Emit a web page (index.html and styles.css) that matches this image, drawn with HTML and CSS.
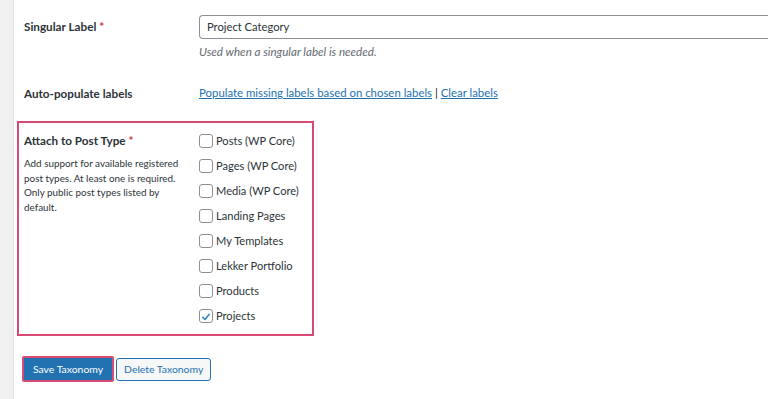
FILE: index.html
```html
<!DOCTYPE html>
<html>
<head>
<meta charset="utf-8">
<link rel="stylesheet" href="styles.css">
</head>
<body>
<div class="page">
  <div class="panel">
    <div class="row row-singular">
      <div class="label">Singular Label <span class="req">*</span></div>
      <div class="field">
        <div class="input">Project Category</div>
        <p class="help">Used when a singular label is needed.</p>
      </div>
    </div>
    <div class="row row-auto">
      <div class="label">Auto-populate labels</div>
      <div class="field links"><a href="#">Populate missing labels based on chosen labels</a> | <a href="#">Clear labels</a></div>
    </div>
    <div class="row row-attach">
      <div class="label">
        <div>Attach to Post Type <span class="req">*</span></div>
        <p class="desc">Add support for available registered post types. At least one is required. Only public post types listed by default.</p>
      </div>
      <div class="field checks">
        <label class="check"><span class="box"></span>Posts (WP Core)</label>
        <label class="check"><span class="box"></span>Pages (WP Core)</label>
        <label class="check"><span class="box"></span>Media (WP Core)</label>
        <label class="check"><span class="box"></span>Landing Pages</label>
        <label class="check"><span class="box"></span>My Templates</label>
        <label class="check"><span class="box"></span>Lekker Portfolio</label>
        <label class="check"><span class="box"></span>Products</label>
        <label class="check"><span class="box checked"><svg viewBox="0 0 14 14" width="14" height="14"><path d="M3.2 7.3 L5.8 9.9 L10.8 3.8" fill="none" stroke="#3582c4" stroke-width="1.8" stroke-linecap="round" stroke-linejoin="round"/></svg></span>Projects</label>
      </div>
    </div>
    <div class="buttons">
      <button class="btn primary">Save Taxonomy</button>
      <button class="btn secondary">Delete Taxonomy</button>
    </div>
  </div>
</div>
</body>
</html>
```
FILE: styles.css
```css
html, body { margin: 0; padding: 0; }
body {
  background: #f0f0f1;
  font-family: "Lato", "Open Sans", sans-serif;
  font-size: 11.5px;
  color: #1d2327;
  width: 768px;
  height: 399px;
  overflow: hidden;
}
.page { padding-left: 13px; height: 399px; }
.panel {
  background: #fff;
  border-left: 1px solid #e2e4e7;
  height: 399px;
  padding-left: 3px;
}
.row {
  display: grid;
  grid-template-columns: 175px 1fr;
  padding-left: 7px;
}
.label { font-weight: 700; color: #2c3338; font-size: 11.7px; }
.req { color: #d63638; }
.row-singular { padding-top: 15px; height: 55px; }
.row-singular .label { padding-top: 4px; }
.input {
  box-sizing: border-box;
  height: 24px;
  border: 1px solid #8c8f94;
  border-right: none;
  border-radius: 4px 0 0 4px;
  padding: 3px 7px;
  line-height: 16px;
  font-size: 11.2px;
  color: #2c3338;
}
.help {
  margin: 6px 0 0 0;
  font-style: italic;
  color: #646970;
  font-size: 11.6px;
}
.row-auto { height: 36px; align-items: start; padding-top: 15px; }
.row-auto .label { padding-top: 1px; }
.links { font-size: 11.4px; color: #1d2327; padding-top: 1px; }
.links a { color: #2271b1; text-decoration: underline; }
.row-attach {
  width: 288px;
  border: 2px solid #d84a73;
  padding: 10px 0 1px 5px;
  grid-template-columns: 175px 1fr;
}
.desc {
  margin: 9px 0 0 0;
  font-weight: 400;
  font-size: 9.9px;
  line-height: 14.5px;
  width: 162px;
}
.checks { display: flex; flex-direction: column; }
.check {
  display: flex;
  align-items: center;
  height: 25px;
  margin-top: -5px;
  margin-bottom: 5px;
  white-space: nowrap;
  font-size: 11.1px;
  color: #2c3338;
}
.box {
  box-sizing: border-box;
  width: 14px;
  height: 14px;
  border: 1px solid #8c8f94;
  border-radius: 3px;
  margin-right: 3px;
  display: inline-flex;
}
.box svg { display: block; }
.buttons { padding: 20px 0 0 5px; display: flex; gap: 2px; align-items: center; }
.btn {
  font-family: inherit;
  font-size: 10.4px;
  border-radius: 3px;
  height: 24px;
  padding: 0 9px;
  cursor: pointer;
}
.primary {
  background: #2271b1;
  color: #fff;
  border: 2px solid #d84a73;
  height: 26px;
  border-radius: 2px;
  padding: 0 9px 0 9px;
}
.secondary {
  background: #f6f7f7;
  color: #2271b1;
  border: 1px solid #2271b1;
  padding: 0 7px;
  height: 23px;
}
```
